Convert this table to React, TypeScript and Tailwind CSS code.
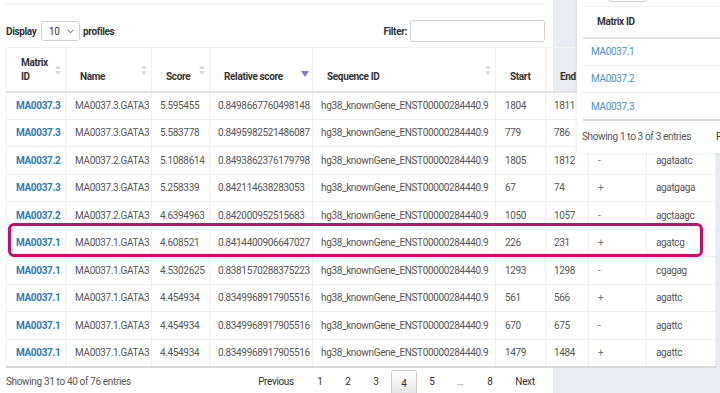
import React from 'react';

type Row = {
  id: string;
  name: string;
  score: string;
  rel: string;
  seqId: string;
  start: string;
  end: string;
  strand: string;
  seq: string;
};

const SEQ_ID = 'hg38_knownGene_ENST00000284440.9';

const rows: Row[] = [
  { id: 'MA0037.3', name: 'MA0037.3.GATA3', score: '5.595455', rel: '0.8498667760498148', seqId: SEQ_ID, start: '1804', end: '1811', strand: '+', seq: 'agatcaga' },
  { id: 'MA0037.3', name: 'MA0037.3.GATA3', score: '5.583778', rel: '0.8495982521486087', seqId: SEQ_ID, start: '779', end: '786', strand: '-', seq: 'agataagc' },
  { id: 'MA0037.2', name: 'MA0037.2.GATA3', score: '5.1088614', rel: '0.8493862376179798', seqId: SEQ_ID, start: '1805', end: '1812', strand: '-', seq: 'agataatc' },
  { id: 'MA0037.3', name: 'MA0037.3.GATA3', score: '5.258339', rel: '0.842114638283053', seqId: SEQ_ID, start: '67', end: '74', strand: '+', seq: 'agatgaga' },
  { id: 'MA0037.2', name: 'MA0037.2.GATA3', score: '4.6394963', rel: '0.842000952515683', seqId: SEQ_ID, start: '1050', end: '1057', strand: '-', seq: 'agctaagc' },
  { id: 'MA0037.1', name: 'MA0037.1.GATA3', score: '4.608521', rel: '0.8414400906647027', seqId: SEQ_ID, start: '226', end: '231', strand: '+', seq: 'agatcg' },
  { id: 'MA0037.1', name: 'MA0037.1.GATA3', score: '4.5302625', rel: '0.8381570288375223', seqId: SEQ_ID, start: '1293', end: '1298', strand: '-', seq: 'cgagag' },
  { id: 'MA0037.1', name: 'MA0037.1.GATA3', score: '4.454934', rel: '0.8349968917905516', seqId: SEQ_ID, start: '561', end: '566', strand: '+', seq: 'agattc' },
  { id: 'MA0037.1', name: 'MA0037.1.GATA3', score: '4.454934', rel: '0.8349968917905516', seqId: SEQ_ID, start: '670', end: '675', strand: '-', seq: 'agattc' },
  { id: 'MA0037.1', name: 'MA0037.1.GATA3', score: '4.454934', rel: '0.8349968917905516', seqId: SEQ_ID, start: '1479', end: '1484', strand: '+', seq: 'agattc' },
];

const FONT = { fontFamily: 'Roboto, "Liberation Sans", sans-serif' };

function SortBoth() {
  return (
    <svg width="6" height="10" viewBox="0 0 6 10" className="absolute right-[4px] top-[17px]">
      <path d="M3 0 L6 4 L0 4 Z" fill="#dcdcdc" />
      <path d="M3 10 L6 6 L0 6 Z" fill="#dcdcdc" />
    </svg>
  );
}

function SortDesc() {
  return (
    <svg width="8" height="6" viewBox="0 0 8 6" className="absolute right-[3px] top-[23px]">
      <path d="M0 0 L8 0 L4 6 Z" fill="#7b7be0" />
    </svg>
  );
}

const headers: { label: React.ReactNode; w: string; icon?: 'both' | 'desc' }[] = [
  { label: <>Matrix<br />ID</>, w: 'w-[59px]', icon: 'both' },
  { label: 'Name', w: 'w-[86px]', icon: 'both' },
  { label: 'Score', w: 'w-[58px]', icon: 'both' },
  { label: 'Relative score', w: 'w-[103px]', icon: 'desc' },
  { label: 'Sequence ID', w: 'w-[183px]', icon: 'both' },
  { label: 'Start', w: 'w-[50px]' },
  { label: 'End', w: 'w-[43px]' },
  { label: 'Strand', w: 'w-[58px]' },
  { label: 'Sequence', w: 'w-[69px]' },
];

export default function App() {
  return (
    <div className="relative flex h-[393px] w-[720px] overflow-hidden bg-[#e9edf2] text-[10px] tracking-[-0.35px] text-[#555]" style={FONT}>
      {/* main card */}
      <div className="h-full w-[553px] shrink-0 bg-white">
        <div className="ml-[5px] mr-[8px] h-[5px] border-b-2 border-[#f3f3f3]" />

        <div className="mt-[15px] flex h-[22px] items-center justify-between pl-[6px] pr-[8px]">
          <div className="flex items-center font-bold text-[#333]">
            <span className="w-[35px]">Display</span>
            <div className="flex h-[20px] w-[39px] items-center justify-between rounded-[3px] border border-[#d0d0d0] pl-[7px] pr-[5px] font-normal">
              <span>10</span>
              <svg width="7" height="5" viewBox="0 0 7 5">
                <path d="M0.5 0.8 L3.5 3.8 L6.5 0.8" fill="none" stroke="#555" strokeWidth="1" />
              </svg>
            </div>
            <span className="ml-[3px]">profiles</span>
          </div>
          <div className="flex items-center gap-[3px] font-bold text-[#333]">
            <span>Filter:</span>
            <div className="h-[22px] w-[135px] rounded-[3px] border border-[#d0d0d0]" />
          </div>
        </div>

        <table className="ml-[6px] mt-[5px] w-[709px] table-fixed border-collapse">
          <thead>
            <tr className="h-[44px] border-b-2 border-t border-b-[#e2e2e2] border-t-[#f2f2f2]">
              {headers.map((h, i) => (
                <th
                  key={i}
                  className={`${h.w} relative border-l border-r border-[#f0f0f0] pb-[7px] pl-[14px] pr-[10px] text-left align-bottom font-bold leading-[14px] text-[#333]`}
                >
                  {h.label}
                  {h.icon === 'both' && <SortBoth />}
                  {h.icon === 'desc' && <SortDesc />}
                </th>
              ))}
            </tr>
          </thead>
          <tbody>
            {rows.map((r, i) => (
              <tr key={i} className="h-[27.5px] border-b border-[#f0f0f0] bg-white last:border-b-2 last:border-b-[#d8d8d8]">
                <td className="border-l border-r border-[#f0f0f0] pl-[9px] font-bold text-[#2c7bb6]">{r.id}</td>
                <td className="whitespace-nowrap border-r border-[#f0f0f0] pl-[9px]">{r.name}</td>
                <td className="border-r border-[#f0f0f0] pl-[8px]">{r.score}</td>
                <td className="border-r border-[#f0f0f0] pl-[8px]">{r.rel}</td>
                <td className="whitespace-nowrap border-r border-[#f0f0f0] pl-[8px]">{r.seqId}</td>
                <td className="border-r border-[#f0f0f0] pl-[9px]">{r.start}</td>
                <td className="border-r border-[#f0f0f0] pl-[8px]">{r.end}</td>
                <td className="border-r border-[#f0f0f0] pl-[9px] text-[#777]">{r.strand}</td>
                <td className="border-r border-[#f0f0f0] pl-[9px]">{r.seq}</td>
              </tr>
            ))}
          </tbody>
        </table>

        <div className="flex h-[27px] items-center pl-[6px]">
          <span className="w-[248px]">Showing 31 to 40 of 76 entries</span>
          <div className="flex h-full items-center text-[#333]">
            <span className="w-[44px] text-center">Previous</span>
            <span className="ml-[8px] w-[28px] text-center">1</span>
            <span className="w-[28px] text-center">2</span>
            <span className="w-[28px] text-center">3</span>
            <span className="ml-[1px] mt-[2px] flex h-[26px] w-[26px] items-center justify-center self-start rounded-t-[2px] border border-b-0 border-[#cfcfcf] bg-gradient-to-b from-white to-[#e2e2e2]">4</span>
            <span className="ml-[1px] w-[28px] text-center">5</span>
            <span className="w-[28px] text-center text-[#888]">…</span>
            <span className="ml-[2px] w-[28px] text-center">8</span>
            <span className="ml-[1px] w-[40px] text-center">Next</span>
          </div>
        </div>
      </div>

      {/* highlighted row */}
      <div className="absolute left-[8px] top-[223px] h-[34px] w-[695px] rounded-[6px] border-[3px] border-[#cc0a6c]" />

      {/* side panel overlay */}
      <div className="absolute left-[577px] top-0 h-[153px] w-[143px] bg-white shadow-[0_0_3px_rgba(0,0,0,0.12)]">
        <div className="absolute left-[31px] top-[-18px] h-[20px] w-[39px] rounded-[3px] border border-[#d0d0d0]" />
        <table className="ml-[6px] mt-[6px] w-[137px] border-collapse">
          <thead>
            <tr className="h-[31px] border-b-2 border-t border-b-[#e2e2e2] border-t-[#f2f2f2]">
              <th className="pl-[14px] text-left font-bold text-[#333]">Matrix ID</th>
            </tr>
          </thead>
          <tbody>
            {['MA0037.1', 'MA0037.2', 'MA0037.3'].map((m, i) => (
              <tr key={m} className={`h-[27.5px] ${i === 2 ? 'border-b-2 border-[#d8d8d8]' : 'border-b border-[#f0f0f0]'}`}>
                <td className="pl-[8px] text-[#4b8fcb]">{m}</td>
              </tr>
            ))}
          </tbody>
        </table>
        <div className="mt-[8px] flex whitespace-nowrap pl-[5px]">
          <span className="w-[134px] shrink-0">Showing 1 to 3 of 3 entries</span>
          <span className="text-[#333]">Previous</span>
        </div>
      </div>
    </div>
  );
}
